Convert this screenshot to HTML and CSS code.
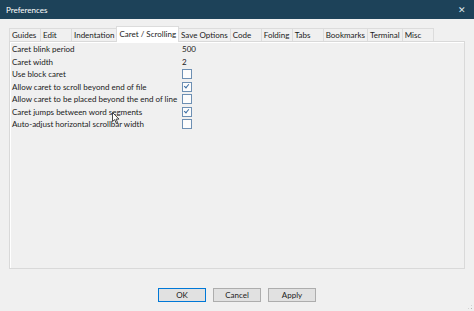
FILE: index.html
```html
<!DOCTYPE html>
<html lang="en">
<head>
<meta charset="UTF-8">
<title>Preferences</title>
<link rel="stylesheet" href="styles.css">
</head>
<body>

<div class="window">
    <div class="titlebar">
        <span class="title">Preferences</span>
        <span class="close">&#x2715;</span>
    </div>

    <div class="dialog">
        <!-- tab strip -->
        <div class="tabs">
            <div class="tab">Guides</div>
            <div class="tab">Edit</div>
            <div class="tab">Indentation</div>
            <div class="tab active">Caret / Scrolling</div>
            <div class="tab">Save Options</div>
            <div class="tab">Code</div>
            <div class="tab">Folding</div>
            <div class="tab">Tabs</div>
            <div class="tab">Bookmarks</div>
            <div class="tab">Terminal</div>
            <div class="tab">Misc</div>
        </div>

        <!-- property grid -->
        <div class="panel">
            <div class="row"><span class="name">Caret blink period</span><span class="value">500</span></div>
            <div class="row"><span class="name">Caret width</span><span class="value">2</span></div>
            <div class="row"><span class="name">Use block caret</span><span class="value"><span class="check"></span></span></div>
            <div class="row"><span class="name">Allow caret to scroll beyond end of file</span><span class="value"><span class="check checked"></span></span></div>
            <div class="row"><span class="name">Allow caret to be placed beyond the end of line</span><span class="value"><span class="check"></span></span></div>
            <div class="row"><span class="name">Caret jumps between word segments</span><span class="value"><span class="check checked"></span></span></div>
            <div class="row"><span class="name">Auto-adjust horizontal scrollbar width</span><span class="value"><span class="check"></span></span></div>

            <svg class="cursor" width="8" height="12" viewBox="0 0 8 12">
                <path d="M0.5 0.5 L0.5 9.5 L2.7 7.6 L4.3 11.2 L5.6 10.6 L4.1 7.1 L7 7.1 Z" fill="#fff" stroke="#333" stroke-width="0.9"/>
            </svg>
        </div>

        <div class="buttons">
            <button type="button" class="btn default">OK</button>
            <button type="button" class="btn">Cancel</button>
            <button type="button" class="btn">Apply</button>
        </div>
    </div>

    <div class="grip"></div>
</div>

</body>
</html>
```

FILE: styles.css
```css
body {
    margin: 0;
    padding: 0;
    background: #f0f0f0;
    font-family: Lato, "Noto Sans", sans-serif;
    font-size: 8px;
    color: #1a1a1a;
}
.window {
    position: relative;
    width: 474px;
    height: 311px;
    overflow: hidden;
}
.titlebar {
    height: 19px;
    background: #1d4259;
    color: #fff;
    display: flex;
    align-items: center;
    justify-content: space-between;
    padding: 0 8px 0 6px;
    font-size: 8px;
}
.close {
    font-size: 9px;
    color: #dfe6ea;
}
.dialog {
    padding: 9px 9px 0 9px;
}
.tabs {
    display: flex;
    align-items: flex-end;
    height: 13px;
}
.tab {
    min-width: 26px;
    height: 12px;
    line-height: 12px;
    padding: 0 2px;
    border: 1px solid #dcdcdc;
    border-bottom: none;
    margin-right: -1px;
    background: #f0f0f0;
    white-space: nowrap;
}
.tab.active {
    position: relative;
    height: 15px;
    line-height: 14px;
    margin-bottom: -1px;
    background: #fff;
    z-index: 1;
}
.panel {
    position: relative;
    height: 225px;
    border: 1px solid #d9d9d9;
    box-shadow: inset 1px 1px 0 #fff;
    padding-top: 1px;
}
.row {
    display: grid;
    grid-template-columns: 170px 1fr;
    height: 12.5px;
    line-height: 12.5px;
    padding-left: 2px;
    white-space: nowrap;
}
.value {
    display: flex;
    align-items: center;
}
.check {
    width: 8px;
    height: 8px;
    border: 1px solid #6d8fb3;
    background: #fcfcfc;
    position: relative;
}
.check.checked::after {
    content: "";
    position: absolute;
    left: 2px;
    top: 0px;
    width: 2px;
    height: 4px;
    border: solid #3d6fa5;
    border-width: 0 1px 1px 0;
    transform: rotate(40deg);
}
.cursor {
    position: absolute;
    left: 102px;
    top: 70px;
}
.buttons {
    display: flex;
    justify-content: center;
    gap: 7px;
    margin-top: 19px;
}
.btn {
    width: 48px;
    height: 14px;
    padding: 0;
    font-family: inherit;
    font-size: 8px;
    color: #1a1a1a;
    background: #e1e1e1;
    border: 1px solid #adadad;
}
.btn.default {
    border-color: #0078d7;
}
.grip {
    position: absolute;
    right: 1px;
    bottom: 1px;
    width: 6px;
    height: 6px;
    background: radial-gradient(circle, #b5b5b5 0.7px, transparent 0.8px) 0 0 / 3px 3px;
    clip-path: polygon(100% 0, 100% 100%, 0 100%);
}
```
